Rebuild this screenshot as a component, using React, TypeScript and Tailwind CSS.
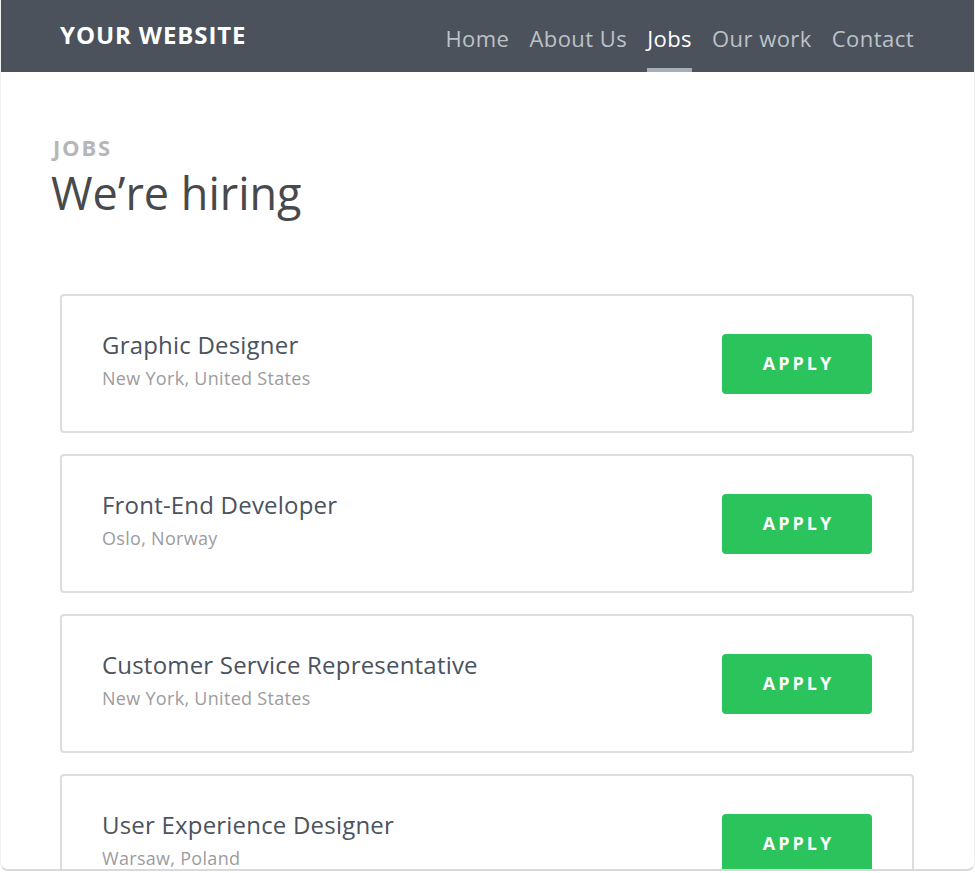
import React from "react";

const jobs = [
  { title: "Graphic Designer", location: "New York, United States" },
  { title: "Front-End Developer", location: "Oslo, Norway" },
  { title: "Customer Service Representative", location: "New York, United States" },
  { title: "User Experience Designer", location: "Warsaw, Poland" },
];

const nav = ["Home", "About Us", "Jobs", "Our work", "Contact"];

export default function App() {
  return (
    <div className="h-[873px] overflow-hidden bg-white" style={{ fontFamily: "'Open Sans', Lato, sans-serif" }}>
      <div className="h-[871px] overflow-hidden rounded-b-[8px] border-b-2 border-x border-[#d9d9d9] border-x-[#f0f0f0] bg-white">
        <header className="flex h-[72px] items-stretch justify-between bg-[#4b525c] pl-[59px] pr-[60px]">
          <div className="flex items-center pb-[2px] text-[24px] font-bold tracking-[0.9px] text-white">YOUR WEBSITE</div>
          <nav className="flex items-stretch gap-[20px]">
            {nav.map((n) => (
              <div key={n} className="relative flex items-center pt-[4px]">
                <span className={`text-[22px] tracking-[0.45px] ${n === "Jobs" ? "text-white" : "text-[#bcc2c8]"}`}>{n}</span>
                {n === "Jobs" && <div className="absolute bottom-0 left-0 right-0 h-[4px] bg-[#a6aeb6]" />}
              </div>
            ))}
          </nav>
        </header>
        <main className="px-[52px] pt-[63px]">
          <div className="text-[22px] font-bold leading-[24px] tracking-[1.8px] text-[#b6b6b9]">JOBS</div>
          <h1 className="-ml-[2px] mt-[8px] text-[45px] leading-[52px] text-[#49494b]">We’re hiring</h1>
          <div className="mt-[75px] flex flex-col gap-[21px] pl-[7px] pr-[8px]">
            {jobs.map((j) => (
              <div key={j.title} className="flex h-[139px] shrink-0 items-center justify-between rounded-[4px] border-2 border-[#dddddd] pl-[40px] pr-[40px]">
                <div className="flex flex-col pb-[7px]">
                  <div className="text-[24px] leading-[30px] tracking-[0.2px] text-[#4a5360]">{j.title}</div>
                  <div className="mt-[6px] text-[18px] leading-[24px] tracking-[0.3px] text-[#9c9c9f]">{j.location}</div>
                </div>
                <button className="flex h-[60px] w-[150px] items-center justify-center rounded-[4px] bg-[#2bc35b] pl-[3px] text-[18px] font-bold tracking-[3px] text-white">
                  APPLY
                </button>
              </div>
            ))}
          </div>
        </main>
      </div>
    </div>
  );
}
